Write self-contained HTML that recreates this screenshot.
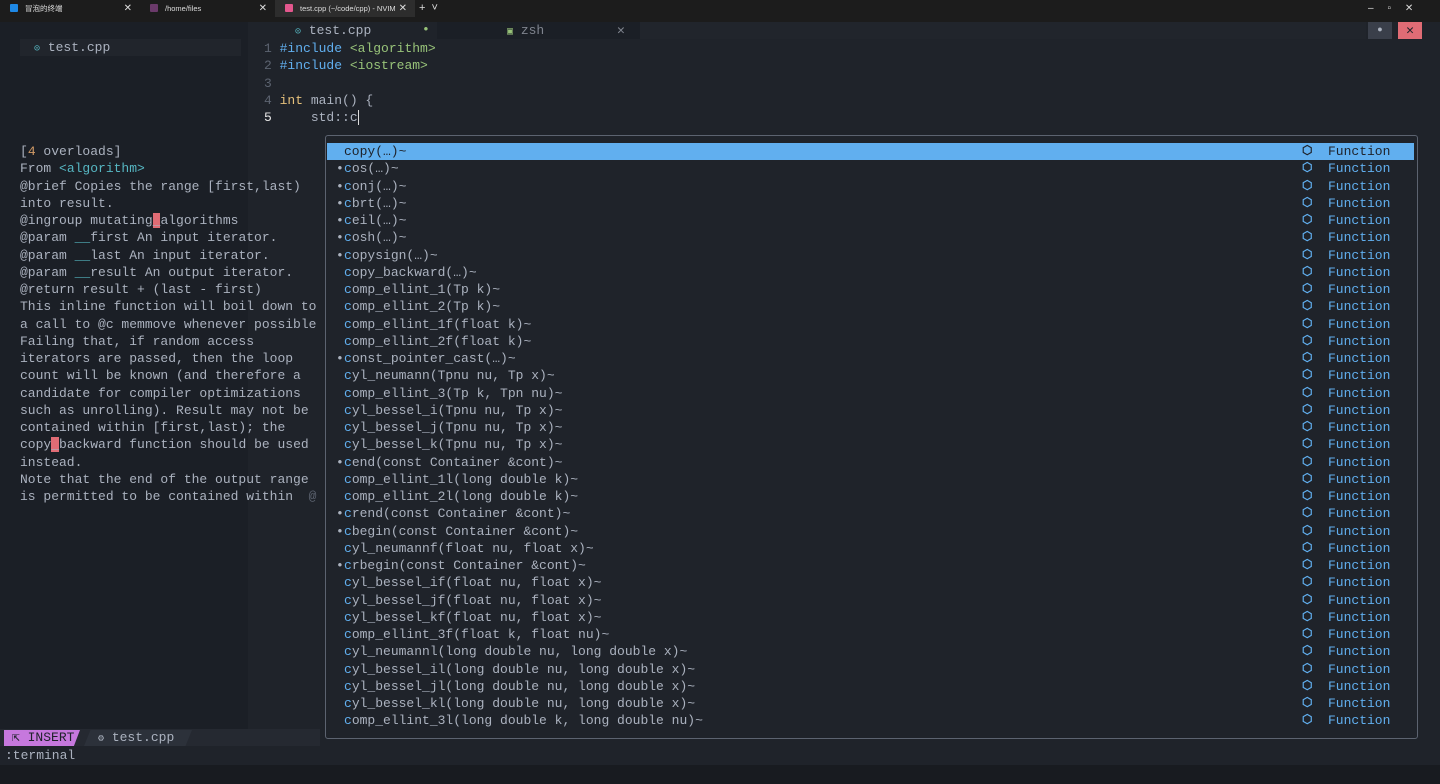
<!DOCTYPE html>
<html><head><meta charset="utf-8"><style>
*{margin:0;padding:0;box-sizing:border-box}
body{width:1440px;height:784px;background:#1f232a;overflow:hidden;position:relative;font-family:"Liberation Mono","DejaVu Sans Mono",monospace;font-size:13px;color:#abb2bf}
.a{position:absolute}
.win{top:0;left:0;width:1440px;height:17px;background:#1c1c1c;font-family:"Liberation Sans","Noto Sans CJK SC",sans-serif;font-size:7.5px;color:#ddd}
.wt{position:absolute;top:0;height:17px;line-height:17px;padding-left:25px}
.wt i{position:absolute;left:10px;top:4px;width:8px;height:8px;border-radius:1px}
.wt b{position:absolute;right:8px;font-weight:normal;font-size:10px}
.ln{height:17.25px;line-height:17.25px;white-space:pre}
.b{color:#61afef}.g{color:#98c379}.y{color:#e5c07b}.c{color:#56b6c2}.o{color:#d19a66}.d{color:#5c6370}
.pm{left:325px;top:135px;width:1093px;height:604px;border:1px solid #5c6370;border-radius:3px;background:#1f232a}
.it{position:relative;height:17.25px;line-height:17.25px;white-space:pre;padding-left:17px}
.it .k{position:absolute;left:1001px;color:#61afef}
.it .ic{position:absolute;left:975px;color:#61afef;font-size:12px;font-weight:bold}
.it .bu{position:absolute;left:9px;color:#abb2bf}
.sel{background:#61afef;color:#1e222a}
.sel .k,.sel .ic{color:#1e222a}
</style></head><body>
<div class="a win">
 <div class="wt" style="left:0;width:140px"><i style="background:#1e88e5"></i>冒泡的终端<b>✕</b></div>
 <div class="wt" style="left:140px;width:135px"><i style="background:#6a3a6a"></i>/home/files<b>✕</b></div>
 <div class="wt" style="left:275px;width:140px;background:#2d2d2d"><i style="background:#e3578d"></i>test.cpp (~/code/cpp) - NVIM<b>✕</b></div>
 <div class="wt" style="left:415px;width:30px;font-size:11px;padding-left:4px">+ &nbsp;˅</div>
 <div class="wt" style="left:1368px;font-size:10px;padding-left:0">–&nbsp;&nbsp;&nbsp;&nbsp;&nbsp;▫&nbsp;&nbsp;&nbsp;&nbsp;&nbsp;✕</div>
</div>
<div class="a" style="left:0;top:17px;width:1440px;height:5px;background:#1c1c1c"></div>
<div class="a" style="left:0;top:22px;width:248px;height:707px;background:#1b1f26"></div>
<div class="a" style="left:20px;top:39px;width:221px;height:17px;background:#21252c"></div>
<div class="a ln" style="left:34px;top:39px"><span class="c" style="font-size:10px">⊙</span> test.cpp</div>
<div class="a" style="left:437px;top:22px;width:203px;height:17px;background:#1b1f26"></div>
<div class="a" style="left:640px;top:22px;width:726px;height:17px;background:#21252c"></div>
<div class="a ln" style="left:295px;top:22px"><span class="c" style="font-size:10px">⊙</span> test.cpp</div>
<div class="a ln g" style="left:422px;top:21px">•</div>
<div class="a ln" style="left:507px;top:22px;color:#7f848e"><span class="g" style="font-size:10px">▣</span> zsh</div>
<div class="a ln" style="left:617px;top:22px;color:#7f848e">✕</div>
<div class="a" style="left:1368px;top:22px;width:24px;height:17px;background:#3a3f4a;color:#abb2bf;font-size:9px;text-align:center;line-height:17px">●</div>
<div class="a" style="left:1398px;top:22px;width:24px;height:17px;background:#e06c75;color:#1e222a;text-align:center;line-height:17px">✕</div>
<div class="a" style="left:264px;top:40px">
<div class="ln"><span class="d">1 </span><span class="b">#include</span> <span class="g">&lt;algorithm&gt;</span></div>
<div class="ln"><span class="d">2 </span><span class="b">#include</span> <span class="g">&lt;iostream&gt;</span></div>
<div class="ln"><span class="d">3</span></div>
<div class="ln"><span class="d">4 </span><span class="y">int</span> main() {</div>
<div class="ln"><span style="color:#e6e6e6">5 </span>    std::c<span style="border-left:1px solid #ddd"></span></div>
</div>
<div class="a" style="left:20px;top:143px">
<div class="ln">[<span class="o">4</span> overloads]</div>
<div class="ln">From <span class="c">&lt;algorithm&gt;</span></div>
<div class="ln">@brief Copies the range [first,last)</div>
<div class="ln">into result.</div>
<div class="ln">@ingroup mutating<span style="background:#e06c75">_</span>algorithms</div>
<div class="ln">@param <span class="c">__</span>first An input iterator.</div>
<div class="ln">@param <span class="c">__</span>last An input iterator.</div>
<div class="ln">@param <span class="c">__</span>result An output iterator.</div>
<div class="ln">@return result + (last - first)</div>
<div class="ln">This inline function will boil down to</div>
<div class="ln">a call to @c memmove whenever possible</div>
<div class="ln">Failing that, if random access</div>
<div class="ln">iterators are passed, then the loop</div>
<div class="ln">count will be known (and therefore a</div>
<div class="ln">candidate for compiler optimizations</div>
<div class="ln">such as unrolling). Result may not be</div>
<div class="ln">contained within [first,last); the</div>
<div class="ln">copy<span style="background:#e06c75">_</span>backward function should be used</div>
<div class="ln">instead.</div>
<div class="ln">Note that the end of the output range</div>
<div class="ln">is permitted to be contained within  <span class="d">@</span></div>
</div>
<div class="a pm"><div style="margin:7px 3px 0 1px">
<div class="it sel">copy(…)~<span class="ic">⬡</span><span class="k">Function</span></div>
<div class="it"><span class="bu">•</span><span class="b">c</span>os(…)~<span class="ic">⬡</span><span class="k">Function</span></div>
<div class="it"><span class="bu">•</span><span class="b">c</span>onj(…)~<span class="ic">⬡</span><span class="k">Function</span></div>
<div class="it"><span class="bu">•</span><span class="b">c</span>brt(…)~<span class="ic">⬡</span><span class="k">Function</span></div>
<div class="it"><span class="bu">•</span><span class="b">c</span>eil(…)~<span class="ic">⬡</span><span class="k">Function</span></div>
<div class="it"><span class="bu">•</span><span class="b">c</span>osh(…)~<span class="ic">⬡</span><span class="k">Function</span></div>
<div class="it"><span class="bu">•</span><span class="b">c</span>opysign(…)~<span class="ic">⬡</span><span class="k">Function</span></div>
<div class="it"><span class="b">c</span>opy_backward(…)~<span class="ic">⬡</span><span class="k">Function</span></div>
<div class="it"><span class="b">c</span>omp_ellint_1(Tp k)~<span class="ic">⬡</span><span class="k">Function</span></div>
<div class="it"><span class="b">c</span>omp_ellint_2(Tp k)~<span class="ic">⬡</span><span class="k">Function</span></div>
<div class="it"><span class="b">c</span>omp_ellint_1f(float k)~<span class="ic">⬡</span><span class="k">Function</span></div>
<div class="it"><span class="b">c</span>omp_ellint_2f(float k)~<span class="ic">⬡</span><span class="k">Function</span></div>
<div class="it"><span class="bu">•</span><span class="b">c</span>onst_pointer_cast(…)~<span class="ic">⬡</span><span class="k">Function</span></div>
<div class="it"><span class="b">c</span>yl_neumann(Tpnu nu, Tp x)~<span class="ic">⬡</span><span class="k">Function</span></div>
<div class="it"><span class="b">c</span>omp_ellint_3(Tp k, Tpn nu)~<span class="ic">⬡</span><span class="k">Function</span></div>
<div class="it"><span class="b">c</span>yl_bessel_i(Tpnu nu, Tp x)~<span class="ic">⬡</span><span class="k">Function</span></div>
<div class="it"><span class="b">c</span>yl_bessel_j(Tpnu nu, Tp x)~<span class="ic">⬡</span><span class="k">Function</span></div>
<div class="it"><span class="b">c</span>yl_bessel_k(Tpnu nu, Tp x)~<span class="ic">⬡</span><span class="k">Function</span></div>
<div class="it"><span class="bu">•</span><span class="b">c</span>end(const Container &amp;cont)~<span class="ic">⬡</span><span class="k">Function</span></div>
<div class="it"><span class="b">c</span>omp_ellint_1l(long double k)~<span class="ic">⬡</span><span class="k">Function</span></div>
<div class="it"><span class="b">c</span>omp_ellint_2l(long double k)~<span class="ic">⬡</span><span class="k">Function</span></div>
<div class="it"><span class="bu">•</span><span class="b">c</span>rend(const Container &amp;cont)~<span class="ic">⬡</span><span class="k">Function</span></div>
<div class="it"><span class="bu">•</span><span class="b">c</span>begin(const Container &amp;cont)~<span class="ic">⬡</span><span class="k">Function</span></div>
<div class="it"><span class="b">c</span>yl_neumannf(float nu, float x)~<span class="ic">⬡</span><span class="k">Function</span></div>
<div class="it"><span class="bu">•</span><span class="b">c</span>rbegin(const Container &amp;cont)~<span class="ic">⬡</span><span class="k">Function</span></div>
<div class="it"><span class="b">c</span>yl_bessel_if(float nu, float x)~<span class="ic">⬡</span><span class="k">Function</span></div>
<div class="it"><span class="b">c</span>yl_bessel_jf(float nu, float x)~<span class="ic">⬡</span><span class="k">Function</span></div>
<div class="it"><span class="b">c</span>yl_bessel_kf(float nu, float x)~<span class="ic">⬡</span><span class="k">Function</span></div>
<div class="it"><span class="b">c</span>omp_ellint_3f(float k, float nu)~<span class="ic">⬡</span><span class="k">Function</span></div>
<div class="it"><span class="b">c</span>yl_neumannl(long double nu, long double x)~<span class="ic">⬡</span><span class="k">Function</span></div>
<div class="it"><span class="b">c</span>yl_bessel_il(long double nu, long double x)~<span class="ic">⬡</span><span class="k">Function</span></div>
<div class="it"><span class="b">c</span>yl_bessel_jl(long double nu, long double x)~<span class="ic">⬡</span><span class="k">Function</span></div>
<div class="it"><span class="b">c</span>yl_bessel_kl(long double nu, long double x)~<span class="ic">⬡</span><span class="k">Function</span></div>
<div class="it"><span class="b">c</span>omp_ellint_3l(long double k, long double nu)~<span class="ic">⬡</span><span class="k">Function</span></div>
</div></div>
<div class="a" style="left:0;top:729px;width:320px;height:17px;background:#252931"></div>
<div class="a" style="left:4px;top:730px;width:76px;height:16px;background:#c678dd;color:#1e222a;line-height:16px;padding-left:8px;clip-path:polygon(0 0,100% 0,92% 100%,0 100%)">⇱ INSERT</div>
<div class="a" style="left:84px;top:730px;width:108px;height:16px;background:#2c313a;line-height:16px;padding-left:14px;clip-path:polygon(6% 0,100% 0,94% 100%,0 100%)"><span style="font-size:10px">⚙</span> test.cpp</div>
<div class="a ln" style="left:5px;top:747px">:terminal</div>
<div class="a" style="left:0;top:765px;width:1440px;height:19px;background:#181b20"></div>
</body></html>
